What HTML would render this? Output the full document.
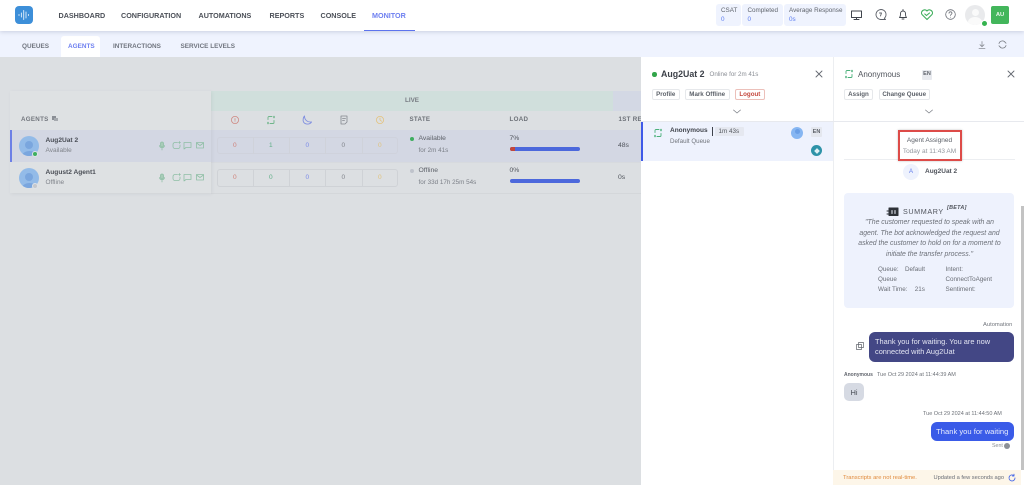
<!DOCTYPE html>
<html><head><meta charset="utf-8"><style>
html,body{margin:0;padding:0}
body{width:1024px;height:485px;overflow:hidden;position:relative;background:#dcdfe2;font-family:"Liberation Sans",sans-serif;color:#40454d}
#w{position:absolute;left:0;top:0;width:1024px;height:485px;overflow:hidden;filter:blur(.35px)}
.a,.t{position:absolute}
.t{white-space:nowrap;line-height:1}
svg{position:absolute;fill:none;stroke-linecap:round;stroke-linejoin:round}
.nav{font-size:7.2px;font-weight:bold;top:11.5px;color:#4c5058}
.sub{font-size:6.4px;font-weight:bold;top:43.5px;color:#70757f}
.stat{top:4px;height:22px;background:#eff3fe;border-radius:3px}
.btn{position:absolute;height:9px;border:1px solid #e6e8eb;border-radius:2px;font-size:6.2px;font-weight:bold;color:#5c6169;line-height:9.500px;text-align:center;background:#fff}
</style></head><body><div id="w">
<!-- header -->
<div class="a" style="left:0;top:0;width:1024px;height:31px;background:#fff;box-shadow:0 1px 4px rgba(90,100,130,.25);z-index:2"></div>
<div class="a" style="left:0;top:31px;width:1024px;height:26px;background:#eff3fe"></div>
<div style="position:absolute;left:0;top:0;width:1024px;height:31px;z-index:3">
<div class="a" style="left:15px;top:6px;width:18px;height:18px;border-radius:4px;background:#3d8fd9"></div>
<svg style="left:15px;top:6px" width="18" height="18" stroke="#e4f0fb" stroke-width=".9"><path d="M4 8.500v1M6.400 7v4M8.700 4.500v9M11 6v6M13.500 8.500v1"/></svg>
<div class="t nav" style="left:58.500px">DASHBOARD</div>
<div class="t nav" style="left:121px">CONFIGURATION</div>
<div class="t nav" style="left:198.500px">AUTOMATIONS</div>
<div class="t nav" style="left:269.500px">REPORTS</div>
<div class="t nav" style="left:320.500px">CONSOLE</div>
<div class="t nav" style="left:372px;color:#6d7ff0">MONITOR</div>
<div class="a" style="left:364px;top:30px;width:51px;height:1px;background:#5d74ee"></div>
<div class="a stat" style="left:716px;width:25px"></div>
<div class="a stat" style="left:742px;width:41px"></div>
<div class="a stat" style="left:784px;width:62px"></div>
<div class="t" style="left:721px;top:7.500px;font-size:6.300px;color:#5f646c">CSAT</div>
<div class="t" style="left:721px;top:16.500px;font-size:6.300px;color:#5b7cf0">0</div>
<div class="t" style="left:747.500px;top:7.500px;font-size:6.300px;color:#5f646c">Completed</div>
<div class="t" style="left:747.500px;top:16.500px;font-size:6.300px;color:#5b7cf0">0</div>
<div class="t" style="left:789px;top:7.500px;font-size:6.300px;color:#5f646c">Average Response</div>
<div class="t" style="left:789px;top:16.500px;font-size:6.300px;color:#5b7cf0">0s</div>
<svg style="left:850px;top:9px" width="13" height="12" stroke="#40454d" stroke-width="1"><rect x="1.500" y="2" width="10" height="6.500"/><path d="M6.500 8.500v2M4 10.500h5"/></svg>
<svg style="left:874px;top:8px" width="13" height="13" stroke="#5c6068" stroke-width=".9"><path d="M11.500 11.500l-1.200-1.200A5 5 0 1 0 6.500 11.500z"/><path d="M5.500 5h2l-1 3"/></svg>
<svg style="left:897px;top:8px" width="12" height="13" stroke="#40454d" stroke-width=".9"><path d="M2.500 9.500c1-1 1-2 1-4a2.500 2.500 0 0 1 5 0c0 2 0 3 1 4zM6 1.500v1M5 11h2"/></svg>
<svg style="left:920px;top:8px" width="14" height="13" stroke="#3fae5c" stroke-width="1.100"><path d="M7 11.500L2 6.500C0 3.500 4.500 0 7 3c2.500-3 7 .5 5 3.500zM4.800 6l1.700 1.500L9.500 5"/></svg>
<svg style="left:944px;top:8px" width="13" height="13" stroke="#6a6e76" stroke-width=".8"><circle cx="6.500" cy="6.500" r="4.800"/><path d="M5 5.300c0-2 3-2 3 0 0 1-1.500 1-1.500 2.200M6.500 9.200v.1"/></svg>
<div class="a" style="left:965px;top:5px;width:20px;height:20px;border-radius:50%;background:#e9eaec;overflow:hidden"><div class="a" style="left:6.500px;top:4px;width:7px;height:7px;border-radius:50%;background:#fafafa"></div><div class="a" style="left:3px;top:12px;width:14px;height:10px;border-radius:50%;background:#fafafa"></div></div>
<div class="a" style="left:980.500px;top:19.500px;width:5px;height:5px;border-radius:50%;background:#35b34f;border:.5px solid #fff"></div>
<div class="a" style="left:991px;top:6px;width:18px;height:18px;border-radius:2px;background:#43b65b"></div>
<div class="t" style="left:991px;top:12.500px;width:18px;text-align:center;font-size:5.800px;font-weight:bold;color:#e8f6ea">AU</div>
</div>
<!-- subnav -->
<div class="a" style="left:61px;top:36px;width:39px;height:21px;background:#fff;border-radius:3px 3px 0 0"></div>
<div class="t sub" style="left:22px">QUEUES</div>
<div class="t sub" style="left:68px;color:#6d7ff0">AGENTS</div>
<div class="t sub" style="left:113px">INTERACTIONS</div>
<div class="t sub" style="left:180.500px">SERVICE LEVELS</div>
<svg style="left:977px;top:40px" width="10" height="10" stroke="#8a8e95" stroke-width=".8"><path d="M5 1.500v5M3 4.700l2 2 2-2M2 8.500h6"/></svg>
<svg style="left:997px;top:39px" width="11" height="11" stroke="#777b83" stroke-width=".8"><path d="M2 4.500a3.500 3.500 0 0 1 6.300-1l.7.7M9 6.500a3.500 3.500 0 0 1-6.300 1l-.7-.7"/></svg>
<!-- table -->
<div class="a" style="left:211px;top:91px;width:403px;height:19.500px;background:#d0dfdc"></div>
<div class="a" style="left:613px;top:91px;width:28px;height:19.500px;background:#d3d8e4"></div>
<div class="t" style="left:405px;top:97.500px;font-size:6.300px;font-weight:bold;color:#777b82">LIVE</div>
<div class="a" style="left:211px;top:129.500px;width:430px;height:32.500px;background:#d3d7e3"></div>
<div class="a" style="left:211px;top:193px;width:430px;height:1px;background:#d4d7da"></div>
<div class="a" style="left:211px;top:162px;width:430px;height:1px;background:#d7dade"></div>
<svg style="left:228.500px;top:114px" width="12" height="12" stroke="#cf8a84" stroke-width=".8"><circle cx="6" cy="6" r="3.600"/><path d="M6 4.500v2M6 7.800v.1"/></svg>
<svg style="left:265px;top:114px" width="12" height="12" stroke="#6fb58a" stroke-width=".9"><path d="M3 5.500V3.500a1 1 0 0 1 1-1h3M9 6.500v2a1 1 0 0 1-1 1H5"/><path d="M9 2.500v1M3 8.500v1" stroke-width="1.500"/></svg>
<svg style="left:301px;top:114px" width="12" height="12" stroke="#7f8ee0" stroke-width=".9"><path d="M3.500 2c0 4 3 6.500 7 6-1.500 2.500-6 3-8 0-1-2 0-5 1-6z"/></svg>
<svg style="left:338px;top:114px" width="12" height="12" stroke="#84888f" stroke-width=".8"><path d="M3 2h6v6l-2 2H3zM4.500 4.500h3M4.500 6.500h2"/></svg>
<svg style="left:374px;top:114px" width="12" height="12" stroke="#e3c37f" stroke-width=".8"><circle cx="6" cy="6" r="3.600"/><path d="M6 4v2l1.500 1.200"/></svg>
<!-- count boxes -->
<div class="a" style="left:217px;top:136.500px;width:181px;height:17.500px;border:.5px solid #cfd2dc;border-radius:3px;box-sizing:border-box"></div>
<div class="a" style="left:217px;top:169.300px;width:181px;height:17.500px;border:.5px solid #cfd2d6;border-radius:3px;box-sizing:border-box"></div>
<div class="a" style="left:252.500px;top:137px;width:.5px;height:17px;background:#cfd2da"></div><div class="a" style="left:289px;top:137px;width:.5px;height:17px;background:#cfd2da"></div><div class="a" style="left:325px;top:137px;width:.5px;height:17px;background:#cfd2da"></div><div class="a" style="left:361.500px;top:137px;width:.5px;height:17px;background:#cfd2da"></div>
<div class="a" style="left:252.500px;top:169.500px;width:.5px;height:17px;background:#cfd2d6"></div><div class="a" style="left:289px;top:169.500px;width:.5px;height:17px;background:#cfd2d6"></div><div class="a" style="left:325px;top:169.500px;width:.5px;height:17px;background:#cfd2d6"></div><div class="a" style="left:361.500px;top:169.500px;width:.5px;height:17px;background:#cfd2d6"></div>
<div class="t" style="left:233px;top:142.500px;font-size:6.500px;color:#cf8078">0</div>
<div class="t" style="left:269px;top:142.500px;font-size:6.500px;color:#5fae86">1</div>
<div class="t" style="left:305.500px;top:142.500px;font-size:6.500px;color:#7b8be8">0</div>
<div class="t" style="left:341.500px;top:142.500px;font-size:6.500px;color:#80848b">0</div>
<div class="t" style="left:378px;top:142.500px;font-size:6.500px;color:#e0c27c">0</div>
<div class="t" style="left:233px;top:175px;font-size:6.500px;color:#cf8078">0</div>
<div class="t" style="left:269px;top:175px;font-size:6.500px;color:#5fae86">0</div>
<div class="t" style="left:305.500px;top:175px;font-size:6.500px;color:#7b8be8">0</div>
<div class="t" style="left:341.500px;top:175px;font-size:6.500px;color:#80848b">0</div>
<div class="t" style="left:378px;top:175px;font-size:6.500px;color:#e0c27c">0</div>
<div class="t" style="left:409.500px;top:117px;font-size:6.200px;font-weight:bold;letter-spacing:.3px;color:#6c7077">STATE</div>
<div class="t" style="left:509.500px;top:117px;font-size:6.200px;font-weight:bold;letter-spacing:.3px;color:#6c7077">LOAD</div>
<div class="t" style="left:618.500px;top:117px;font-size:6.200px;font-weight:bold;letter-spacing:.3px;color:#6c7077">1ST RE</div>
<div class="a" style="left:410px;top:137px;width:4px;height:4px;border-radius:50%;background:#3fae5f"></div>
<div class="t" style="left:418.500px;top:135.500px;font-size:6.800px;color:#5d6169">Available</div>
<div class="t" style="left:418.500px;top:147.500px;font-size:6.300px;color:#7b7f87">for 2m 41s</div>
<div class="a" style="left:410px;top:169px;width:4px;height:4px;border-radius:50%;background:#bfc3cb"></div>
<div class="t" style="left:418.500px;top:167.500px;font-size:6.800px;color:#5d6169">Offline</div>
<div class="t" style="left:418.500px;top:180px;font-size:6.300px;color:#7b7f87">for 33d 17h 25m 54s</div>
<div class="t" style="left:509.500px;top:135.500px;font-size:6.800px;color:#4f535b">7%</div>
<div class="t" style="left:509.500px;top:167.500px;font-size:6.800px;color:#4f535b">0%</div>
<div class="a" style="left:510px;top:147px;width:69.500px;height:4px;border-radius:2px;background:#4c68dc;overflow:hidden"><div style="width:5px;height:4px;background:#c2473c"></div></div>
<div class="a" style="left:510px;top:179px;width:69.500px;height:4px;border-radius:2px;background:#4c68dc"></div>
<div class="t" style="left:618px;top:142.500px;font-size:6.800px;color:#4f535b">48s</div>
<div class="t" style="left:618px;top:175px;font-size:6.800px;color:#4f535b">0s</div>
<!-- agents card -->
<div class="a" style="left:10px;top:91px;width:201px;height:102px;background:#dee1e3;box-shadow:1px 1px 3px rgba(120,125,130,.12)"></div>
<div class="t" style="left:21px;top:116.500px;font-size:6.200px;font-weight:bold;letter-spacing:.3px;color:#72767d">AGENTS</div>
<div class="a" style="left:52px;top:116px;width:4px;height:4px;background:#8a8e95"></div><div class="a" style="left:54px;top:118px;width:4px;height:3px;background:#a5a9ae"></div>
<div class="a" style="left:10px;top:129.500px;width:201px;height:32.500px;background:#d3d7e3"></div>
<div class="a" style="left:10px;top:129.500px;width:2px;height:32.500px;background:#6d80e6"></div>
<div class="a" style="left:19px;top:136px;width:20px;height:20px;border-radius:50%;background:#93bbe8;overflow:hidden"><div class="a" style="left:6px;top:4.500px;width:8px;height:8px;border-radius:50%;background:#7aa6de"></div><div class="a" style="left:2.500px;top:15px;width:15px;height:10px;border-radius:50%;background:#7aa6de"></div></div>
<div class="a" style="left:31.500px;top:151px;width:4px;height:4px;border-radius:50%;background:#3fb05f;border:.5px solid #dfe3e8"></div>
<div class="a" style="left:19px;top:168px;width:20px;height:20px;border-radius:50%;background:#93bbe8;overflow:hidden"><div class="a" style="left:6px;top:4.500px;width:8px;height:8px;border-radius:50%;background:#7aa6de"></div><div class="a" style="left:2.500px;top:15px;width:15px;height:10px;border-radius:50%;background:#7aa6de"></div></div>
<div class="a" style="left:31.500px;top:183px;width:4px;height:4px;border-radius:50%;background:#c5c8cd;border:.5px solid #dfe3e8"></div>
<div class="t" style="left:45.500px;top:137.500px;font-size:6.600px;font-weight:bold;color:#4a4e56">Aug2Uat 2</div>
<div class="t" style="left:45.500px;top:147.500px;font-size:6.500px;color:#80848b">Available</div>
<div class="t" style="left:45.500px;top:169.500px;font-size:6.600px;font-weight:bold;color:#4a4e56">August2 Agent1</div>
<div class="t" style="left:45.500px;top:179.500px;font-size:6.500px;color:#80848b">Offline</div>
<svg style="left:157px;top:140px" width="48" height="12" stroke="#8fbfa5" stroke-width=".8"><rect x="3.500" y="2" width="3" height="5" rx="1.500" fill="#a8ccb8"/><path d="M2.500 5.500c0 3 5 3 5 0M5 8.500v1.500"/><path d="M20.500 2.500H18a2 2 0 0 0-2 2v2a2 2 0 0 0 2 2h3a2 2 0 0 0 2-2V5M22.500 1.500v2M21.500 2.500h2"/><path d="M27 2.500h7v5h-5l-2 1.500z"/><rect x="39.500" y="2.500" width="7" height="5.500"/><path d="M39.500 3l3.500 2.500 3.500-2.500"/></svg>
<svg style="left:157px;top:172px" width="48" height="12" stroke="#8fbfa5" stroke-width=".8"><rect x="3.500" y="2" width="3" height="5" rx="1.500" fill="#a8ccb8"/><path d="M2.500 5.500c0 3 5 3 5 0M5 8.500v1.500"/><path d="M20.500 2.500H18a2 2 0 0 0-2 2v2a2 2 0 0 0 2 2h3a2 2 0 0 0 2-2V5M22.500 1.500v2M21.500 2.500h2"/><path d="M27 2.500h7v5h-5l-2 1.500z"/><rect x="39.500" y="2.500" width="7" height="5.500"/><path d="M39.500 3l3.500 2.500 3.500-2.500"/></svg>
<!-- middle panel -->
<div class="a" style="left:641px;top:57px;width:192px;height:428px;background:#fff"></div>
<div class="a" style="left:652px;top:72px;width:4.500px;height:4.500px;border-radius:50%;background:#32a54a"></div>
<div class="t" style="left:661px;top:70px;font-size:8.800px;font-weight:bold;color:#3c4048">Aug2Uat 2</div>
<div class="t" style="left:709.500px;top:71.500px;font-size:6.200px;color:#8a8e95">Online for 2m 41s</div>
<svg style="left:814px;top:69px" width="10" height="10" stroke="#666a72" stroke-width=".9"><path d="M2 2l6 6M8 2l-6 6"/></svg>
<div class="btn" style="left:651.500px;top:89.300px;width:26.400px">Profile</div>
<div class="btn" style="left:684.700px;top:89.300px;width:43px">Mark Offline</div>
<div class="btn" style="left:735px;top:89.300px;width:27.700px;border-color:#ecc0ba;color:#c4483e">Logout</div>
<svg style="left:731px;top:108px" width="12" height="8" stroke="#7d8188" stroke-width=".8"><path d="M2.500 2l3.500 3 3.500-3"/></svg>
<div class="a" style="left:641px;top:120.500px;width:192px;height:1px;background:#e7e9ee"></div>
<div class="a" style="left:641px;top:121.500px;width:192px;height:39.500px;background:#eef2fd"></div>
<div class="a" style="left:641px;top:121.500px;width:2px;height:39.500px;background:#3f5ae8"></div>
<svg style="left:652px;top:127px" width="12" height="12" stroke="#4bb07a" stroke-width=".9"><path d="M3 5.500V3.500a1 1 0 0 1 1-1h3M9 6.500v2a1 1 0 0 1-1 1H5"/><path d="M9 2.500v1M3 8.500v1" stroke-width="1.500"/></svg>
<div class="t" style="left:670px;top:128px;font-size:6.500px;font-weight:bold;color:#3f434b">Anonymous</div>
<div class="a" style="left:712px;top:127px;width:1px;height:8.500px;background:#3f434b"></div>
<div class="a" style="left:714.500px;top:127px;width:29.500px;height:9px;background:#e5e8f0;border-radius:1px"></div>
<div class="t" style="left:718.500px;top:128.500px;font-size:6.300px;color:#555960">1m 43s</div>
<div class="t" style="left:670px;top:138.500px;font-size:6.200px;color:#71757c">Default Queue</div>
<div class="a" style="left:791px;top:127px;width:12px;height:12px;border-radius:50%;background:#86b6f2"></div>
<div class="a" style="left:794.500px;top:129px;width:5px;height:5px;border-radius:50%;background:#6a9fe6"></div>
<div class="a" style="left:811px;top:127px;width:11px;height:10px;background:#e4e7ee;border-radius:1px"></div>
<div class="t" style="left:811px;top:129.500px;width:11px;text-align:center;font-size:5.500px;font-weight:bold;color:#5f636b">EN</div>
<div class="a" style="left:811px;top:145px;width:11px;height:11px;border-radius:50%;background:#2e93a8"></div>
<div class="a" style="left:814.500px;top:148.500px;width:4px;height:4px;background:#dff0f4;transform:rotate(45deg)"></div>
<!-- right panel -->
<div class="a" style="left:833px;top:57px;width:191px;height:428px;background:#fff;border-left:1px solid #eceef1;box-sizing:border-box"></div>
<svg style="left:843px;top:68px" width="12" height="12" stroke="#4bb07a" stroke-width=".9"><path d="M3 5.500V3.500a1 1 0 0 1 1-1h3M9 6.500v2a1 1 0 0 1-1 1H5"/><path d="M9 2.500v1M3 8.500v1" stroke-width="1.500"/></svg>
<div class="t" style="left:858px;top:71px;font-size:8px;color:#50545c">Anonymous</div>
<div class="a" style="left:922px;top:70px;width:10px;height:9.500px;background:#e8eaef;border-radius:1px"></div>
<div class="t" style="left:922px;top:72.300px;width:10px;text-align:center;font-size:5.500px;font-weight:bold;color:#5f636b">EN</div>
<svg style="left:1006px;top:69px" width="10" height="10" stroke="#666a72" stroke-width=".9"><path d="M2 2l6 6M8 2l-6 6"/></svg>
<div class="btn" style="left:844.300px;top:89.300px;width:26.400px">Assign</div>
<div class="btn" style="left:878.700px;top:89.300px;width:49px">Change Queue</div>
<svg style="left:923px;top:108px" width="12" height="8" stroke="#7d8188" stroke-width=".8"><path d="M2.500 2l3.500 3 3.500-3"/></svg>
<div class="a" style="left:833px;top:120.500px;width:191px;height:1px;background:#e7e9ee"></div>
<div class="a" style="left:844px;top:159px;width:171px;height:1px;background:#eceef1"></div>
<div class="a" style="left:898px;top:130px;width:64px;height:31px;background:#fff;border:2px solid #dd4b48;box-sizing:border-box;box-shadow:0 0 2px rgba(0,0,0,.25)"></div>
<div class="t" style="left:897px;top:138px;width:65px;text-align:center;font-size:6.500px;color:#5c6068">Agent Assigned</div>
<div class="t" style="left:897px;top:148.500px;width:65px;text-align:center;font-size:6.500px;color:#94989f">Today at 11:43 AM</div>
<div class="a" style="left:903px;top:164px;width:16px;height:16px;border-radius:50%;background:#eef2fd"></div>
<div class="t" style="left:903px;top:169px;width:16px;text-align:center;font-size:6px;color:#5f7bec">A</div>
<div class="t" style="left:925px;top:169px;font-size:6.500px;font-weight:bold;color:#4f535b">Aug2Uat 2</div>
<div class="a" style="left:844px;top:193.300px;width:170.300px;height:115px;background:#eef2fd;border-radius:4px"></div>
<svg style="left:886px;top:206px" width="13" height="11" stroke="#2e3238" stroke-width="1"><rect x="3" y="2" width="9" height="7.500" fill="#2e3238"/><path d="M1 5h2M1 8h2"/><path d="M6 4.500v3M9 4.500v3" stroke="#eef2fd"/></svg>
<div class="t" style="left:903px;top:208px;font-size:7.200px;letter-spacing:.6px;color:#50545c">SUMMARY</div>
<div class="t" style="left:947px;top:206px;font-size:5.400px;font-style:italic;font-weight:bold;letter-spacing:.3px;color:#50545c">[BETA]</div>
<div class="a" style="left:844px;top:218px;width:171px;font-size:6.900px;font-style:italic;line-height:10.600px;text-align:center;color:#6c7078;white-space:nowrap">"The customer requested to speak with an<br>agent. The bot acknowledged the request and<br>asked the customer to hold on for a moment to<br>initiate the transfer process."</div>
<div class="t" style="left:878px;top:267px;font-size:6.300px;color:#6a6e76">Queue:</div>
<div class="t" style="left:905px;top:267px;font-size:6.300px;color:#6a6e76">Default</div>
<div class="t" style="left:878px;top:277px;font-size:6.300px;color:#6a6e76">Queue</div>
<div class="t" style="left:878px;top:287px;font-size:6.300px;color:#6a6e76">Wait Time:</div>
<div class="t" style="left:914.700px;top:287px;font-size:6.300px;color:#6a6e76">21s</div>
<div class="t" style="left:945.500px;top:267px;font-size:6.300px;color:#6a6e76">Intent:</div>
<div class="t" style="left:945.500px;top:277px;font-size:6.300px;color:#6a6e76">ConnectToAgent</div>
<div class="t" style="left:945.500px;top:287px;font-size:6.300px;color:#6a6e76">Sentiment:</div>
<div class="a" style="left:1021px;top:206px;width:3px;height:264px;background:#c3c3c3"></div>
<div class="t" style="left:983px;top:322.500px;font-size:5.800px;color:#72767d">Automation</div>
<svg style="left:855px;top:341px" width="10" height="10" stroke="#62666e" stroke-width=".7"><rect x="1.500" y="3.500" width="5" height="5"/><rect x="3.500" y="1.500" width="5" height="5"/></svg>
<div class="a" style="left:868.500px;top:332.300px;width:145.700px;height:29.500px;background:#434785;border-radius:6px"></div>
<div class="t" style="left:875px;top:337.500px;font-size:7.400px;color:#e4e6f3">Thank you for waiting. You are now</div>
<div class="t" style="left:875px;top:348px;font-size:7.400px;color:#e4e6f3">connected with Aug2Uat</div>
<div class="t" style="left:844px;top:373px;font-size:5px;font-weight:bold;color:#62666e">Anonymous</div>
<div class="t" style="left:877px;top:373px;font-size:5.500px;color:#6d7178">Tue Oct 29 2024 at 11:44:39 AM</div>
<div class="a" style="left:844px;top:382.700px;width:20px;height:18.500px;background:#d6dae3;border-radius:5px"></div>
<div class="t" style="left:844px;top:388.500px;width:20px;text-align:center;font-size:7.500px;color:#4a4e56">Hi</div>
<div class="t" style="left:923px;top:412px;font-size:5.500px;color:#6d7178">Tue Oct 29 2024 at 11:44:50 AM</div>
<div class="a" style="left:930.500px;top:422px;width:83.500px;height:19px;background:#3a5be8;border-radius:6px"></div>
<div class="t" style="left:930.500px;top:427.500px;width:83.500px;text-align:center;font-size:7.600px;color:#e8edfe">Thank you for waiting</div>
<div class="t" style="left:992px;top:443.500px;font-size:5.300px;color:#8a8e95">Sent</div>
<div class="a" style="left:1004px;top:443px;width:6px;height:6px;border-radius:50%;background:#8c9097"></div>
<div class="a" style="left:833px;top:470px;width:188px;height:15px;background:#fdf6e9"></div>
<div class="a" style="left:1021px;top:470px;width:3px;height:15px;background:#fff"></div>
<div class="t" style="left:843px;top:475.500px;font-size:5.800px;color:#e08a3c">Transcripts are not real-time.</div>
<div class="t" style="left:933.500px;top:475.500px;font-size:5.700px;color:#6a6e76">Updated a few seconds ago</div>
<svg style="left:1007px;top:473px" width="10" height="10" stroke="#4a6be8" stroke-width=".9"><path d="M8 5a3 3 0 1 1-1-2.300M7 1.200v1.800H5.500"/></svg>
</div></body></html>
